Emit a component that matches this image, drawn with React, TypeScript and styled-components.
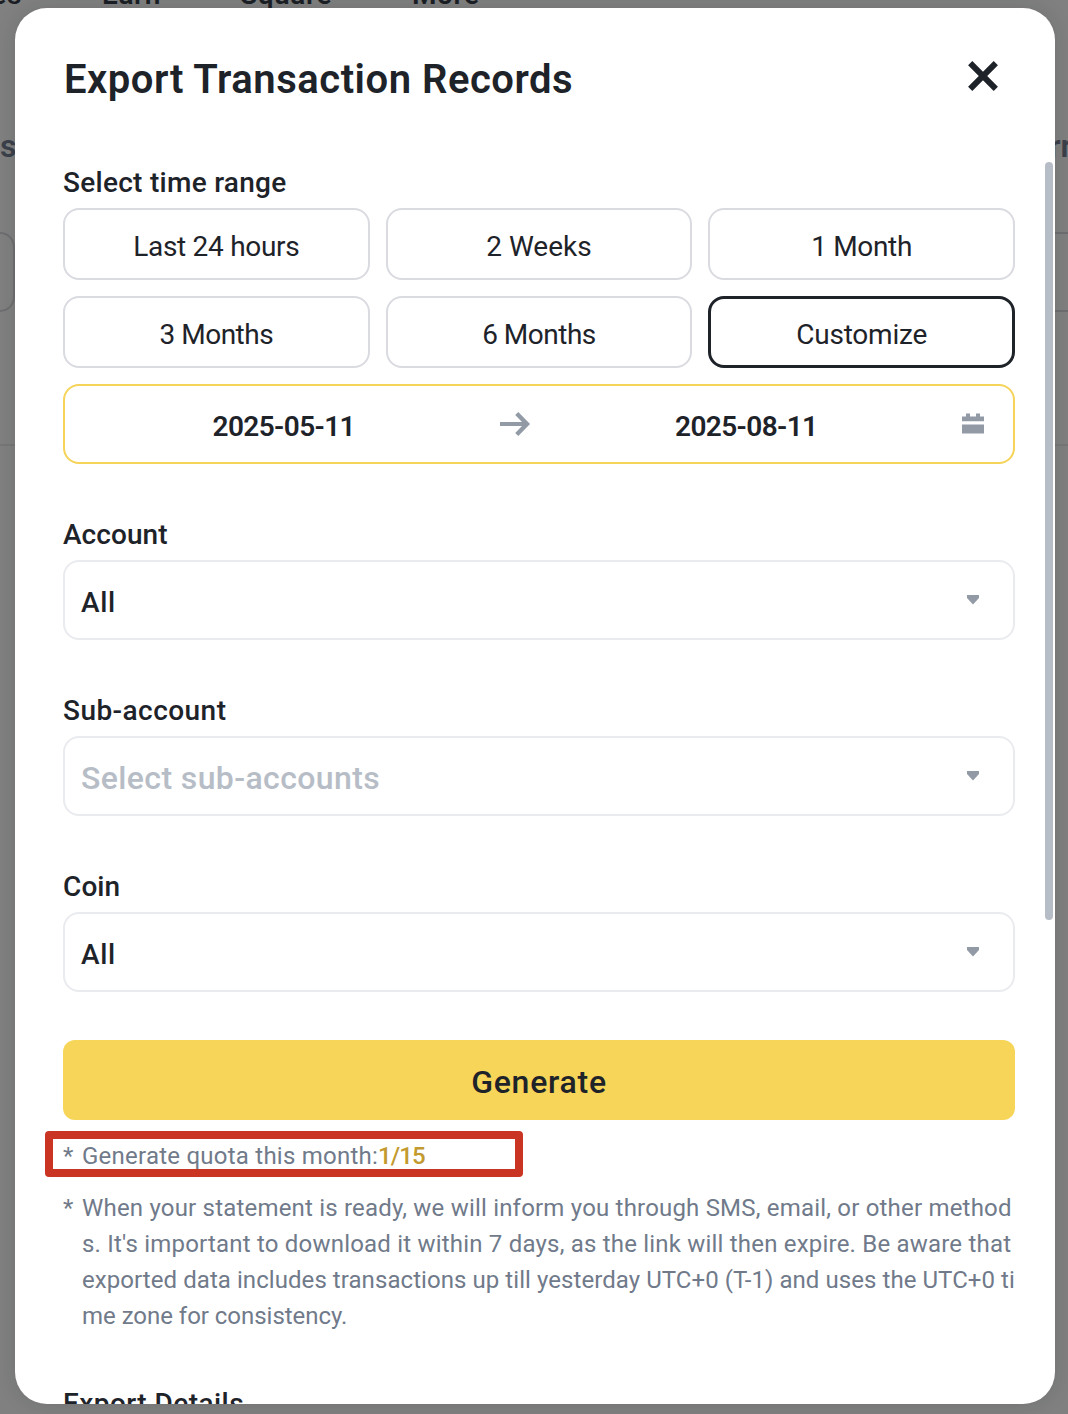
import React, { useState } from 'react';
import styled, { createGlobalStyle } from 'styled-components';

const GlobalStyle = createGlobalStyle`
  * { box-sizing: border-box; }
  body {
    margin: 0;
    overflow: hidden;
    background: #808080;
    color: #1e2329;
    font-family: Roboto, "Noto Sans", sans-serif;
  }
  button { font-family: inherit; color: inherit; }
`

const Screen = styled.div`
  display: grid;
  grid-template: 1414px / 1068px;
  overflow: hidden;
`

// page under the mask
const Page = styled.div`
  grid-area: 1 / 1;
  min-width: 0;
  overflow: hidden;
  background: #808080;
`

const Nav = styled.div`
  display: grid;
  grid-template-columns: 102px 138px 172px auto;
  margin-top: -23px;
  height: 36px;
  font-size: 28px;
  line-height: 36px;
  font-weight: 600;
  letter-spacing: 0.6px;
  color: #1b1f25;
`

const NavItem = styled.span<{ $cut?: boolean }>`
  display: flex;
  justify-content: flex-end;
  width: ${p => p.$cut ? '22px' : 'max-content'};
`

const PageTabs = styled.div`
  display: flex;
  justify-content: space-between;
  margin-top: 111px;
  height: 44px;
  font-size: 32px;
  line-height: 44px;
  font-weight: 600;
  color: #3b404a;
`

const PageTab = styled.span<{ $width: number }>`
  width: ${p => p.$width}px;
  white-space: nowrap;
`

const PageFilters = styled.div`
  display: flex;
  justify-content: space-between;
  margin-top: 64px;
  height: 80px;
`

const FilterBox = styled.div<{ $side: 'left' | 'right' }>`
  width: ${p => p.$side === 'left' ? 15 : 68}px;
  border: 2px solid #6e6e70;
  border-width: ${p => p.$side === 'left' ? '2px 2px 2px 0' : '2px 0'};
  border-radius: ${p => p.$side === 'left' ? '0 16px 16px 0' : 0};
`

const PageLine = styled.div`
  margin-top: 132px;
  height: 2px;
  background: #777778;
`

const Modal = styled.div`
  grid-area: 1 / 1;
  z-index: 1;
  display: flex;
  flex-direction: column;
  width: 1040px;
  height: 1396px;
  margin: 8px 0 0 15px;
  border-radius: 32px;
  background: #fff;
  overflow: hidden;
  box-shadow: 0 0 20px rgba(24, 26, 32, 0.14);
`

const Header = styled.div`
  display: flex;
  justify-content: space-between;
  flex: none;
  height: 140px;
  padding: 43px 57px 0 49px;
`

const Title = styled.h1`
  margin: 1px 0 0;
  font-size: 40px;
  line-height: 56px;
  font-weight: 600;
  letter-spacing: 0.52px;
`

const CloseButton = styled.button`
  display: flex;
  width: 30px;
  height: 30px;
  margin-top: 10px;
  padding: 0;
  border: 0;
  background: none;
`

const Body = styled.div`
  display: grid;
  grid-template-columns: 952px 8px;
  column-gap: 30px;
  flex: 1;
  min-height: 0;
  padding-left: 48px;
  overflow: hidden;
`

const ScrollThumb = styled.div`
  height: 758px;
  margin-top: 14px;
  border-radius: 4px;
  background: #b7bdc6;
`

const Form = styled.div`
  display: flex;
  flex-direction: column;
  padding-top: 17px;
`

const Field = styled.div`
  margin-bottom: 53px;
`

const Label = styled.div<{ $track?: number }>`
  height: 36px;
  margin-bottom: 7px;
  font-size: 28px;
  line-height: 36px;
  font-weight: 500;
  letter-spacing: ${p => p.$track || 0}px;
`

const RangeGrid = styled.div`
  display: grid;
  grid-template-columns: repeat(3, 1fr);
  gap: 16px;
`

const RangeButton = styled.button<{ $active: boolean; $track: number }>`
  height: 72px;
  padding: 6px 0 0;
  border: ${p => p.$active ? '3px solid #1e2329' : '2px solid #dadbe1'};
  border-radius: 16px;
  background: #fff;
  font-size: 28px;
  line-height: 36px;
  font-weight: 400;
  letter-spacing: ${p => p.$track}px;
`

const DateRange = styled.div`
  display: flex;
  align-items: center;
  height: 80px;
  margin-top: 16px;
  padding: 0 15px 0 16px;
  border: 2px solid #f6d359;
  border-radius: 16px;
`

const DateText = styled.div`
  flex: 1;
  padding: 5px 0 0 1px;
  text-align: center;
  font-size: 28px;
  line-height: 36px;
  font-weight: 600;
  letter-spacing: -0.6px;
`

const IconCell = styled.div<{ $width: number }>`
  display: flex;
  justify-content: center;
  flex: none;
  width: ${p => p.$width}px;
`

const SelectBox = styled.div`
  display: flex;
  align-items: center;
  justify-content: space-between;
  height: 80px;
  padding: 0 34px 0 16px;
  border: 2px solid #eaebef;
  border-radius: 16px;
`

const SelectValue = styled.span<{ $placeholder?: boolean }>`
  padding-top: ${p => p.$placeholder ? 4 : 5}px;
  font-size: ${p => p.$placeholder ? 32 : 28}px;
  line-height: 36px;
  font-weight: 500;
  letter-spacing: ${p => p.$placeholder ? 0.38 : 0.6}px;
  color: ${p => p.$placeholder ? '#b7bdc6' : '#1e2329'};
`

const GenerateButton = styled.button`
  height: 80px;
  margin-top: -5px;
  padding: 4px 0 0;
  border: 0;
  border-radius: 12px;
  background: #f6d559;
  font-size: 32px;
  line-height: 40px;
  font-weight: 500;
  letter-spacing: 0.75px;
`

const Note = styled.div<{ $top: number }>`
  position: relative;
  display: grid;
  grid-template-columns: 19px 1fr;
  margin-top: ${p => p.$top}px;
  font-size: 24px;
  line-height: 36px;
  color: #707a8a;
`

const NoteLine = styled.div<{ $track: number }>`
  white-space: nowrap;
  letter-spacing: ${p => p.$track}px;
`

const Quota = styled.span`
  color: #c29a30;
  font-weight: 500;
  letter-spacing: -0.9px;
`

const Marker = styled.div`
  position: absolute;
  left: -18px;
  top: -7px;
  width: 478px;
  height: 46px;
  border: 8px solid #ca3423;
  border-radius: 4px;
`

const DetailsTitle = styled.div`
  margin-top: 52px;
  font-size: 28px;
  line-height: 36px;
  font-weight: 500;
  letter-spacing: 0.45px;
`

const ranges = [
  { label: 'Last 24 hours', track: -0.3 },
  { label: '2 Weeks', track: 0 },
  { label: '1 Month', track: -0.35 },
  { label: '3 Months', track: -0.5 },
  { label: '6 Months', track: -0.5 },
  { label: 'Customize', track: -0.2 },
]

const selects = [
  { label: 'Account', track: 0.05, value: 'All' },
  { label: 'Sub-account', track: 0.45, placeholder: 'Select sub-accounts' },
  { label: 'Coin', track: 0.1, value: 'All' },
]

const noteLines = [
  { text: 'When your statement is ready, we will inform you through SMS, email, or other method', track: 0.195 },
  { text: "s. It's important to download it within 7 days, as the link will then expire. Be aware that", track: 0.2 },
  { text: 'exported data includes transactions up till yesterday UTC+0 (T-1) and uses the UTC+0 ti', track: 0.065 },
  { text: 'me zone for consistency.', track: -0.03 },
]

const CloseIcon = () => (
  <svg width="30" height="30" viewBox="0 0 30 30" fill="none">
    <path d="M2.2 2.2 27.8 27.8M27.8 2.2 2.2 27.8" stroke="#1e2329" strokeWidth="6" />
  </svg>
)

const ArrowIcon = () => (
  <svg width="30" height="24" viewBox="0 0 30 24" fill="#929aa5">
    <path d="M0 9.9H22L15.2 3 18.3 0 30 12 18.3 24 15.2 21 22 14.1H0Z" />
  </svg>
)

const CalendarIcon = () => (
  <svg width="22" height="22" viewBox="0 0 22 22" fill="#929aa5">
    <path d="M0 3.5H4V.5H8V3.5H14V.5H18V3.5H22V8.3H0ZM0 11.5H22V20.6H0Z" />
  </svg>
)

const CaretIcon = () => (
  <svg width="12" height="10" viewBox="0 0 12 10" fill="#929aa5">
    <path d="M0 0H12V3L6 9.6 0 3Z" />
  </svg>
)

export default (): React.ReactNode => {
  const [range, setRange] = useState('Customize')

  return (
    <Screen>
      <GlobalStyle />
      <Page>
        <Nav>
          <NavItem $cut>es</NavItem>
          <NavItem>Earn</NavItem>
          <NavItem>Square</NavItem>
          <NavItem>More</NavItem>
        </Nav>
        <PageTabs>
          <PageTab $width={15}>s</PageTab>
          <PageTab $width={19}>rr</PageTab>
        </PageTabs>
        <PageFilters>
          <FilterBox $side="left" />
          <FilterBox $side="right" />
        </PageFilters>
        <PageLine />
      </Page>

      <Modal>
        <Header>
          <Title>Export Transaction Records</Title>
          <CloseButton aria-label="Close"><CloseIcon /></CloseButton>
        </Header>
        <Body>
          <Form>
            <Field>
              <Label $track={0.28}>Select time range</Label>
              <RangeGrid>
                {ranges.map(item => (
                  <RangeButton
                    key={item.label}
                    $active={item.label === range}
                    $track={item.track}
                    onClick={() => setRange(item.label)}
                  >
                    {item.label}
                  </RangeButton>
                ))}
              </RangeGrid>
              <DateRange>
                <DateText>2025-05-11</DateText>
                <IconCell $width={58}><ArrowIcon /></IconCell>
                <DateText>2025-08-11</DateText>
                <IconCell $width={50}><CalendarIcon /></IconCell>
              </DateRange>
            </Field>

            {selects.map(item => (
              <Field key={item.label}>
                <Label $track={item.track}>{item.label}</Label>
                <SelectBox>
                  <SelectValue $placeholder={!item.value}>{item.value || item.placeholder}</SelectValue>
                  <CaretIcon />
                </SelectBox>
              </Field>
            ))}

            <GenerateButton>Generate</GenerateButton>

            <Note $top={18}>
              <span>*</span>
              <NoteLine $track={0.24}>Generate quota this month:<Quota>1/15</Quota></NoteLine>
              <Marker />
            </Note>
            <Note $top={16}>
              <span>*</span>
              <div>
                {noteLines.map(line => (
                  <NoteLine key={line.text} $track={line.track}>{line.text}</NoteLine>
                ))}
              </div>
            </Note>

            <DetailsTitle>Export Details</DetailsTitle>
          </Form>
          <ScrollThumb />
        </Body>
      </Modal>
    </Screen>
  );
};
